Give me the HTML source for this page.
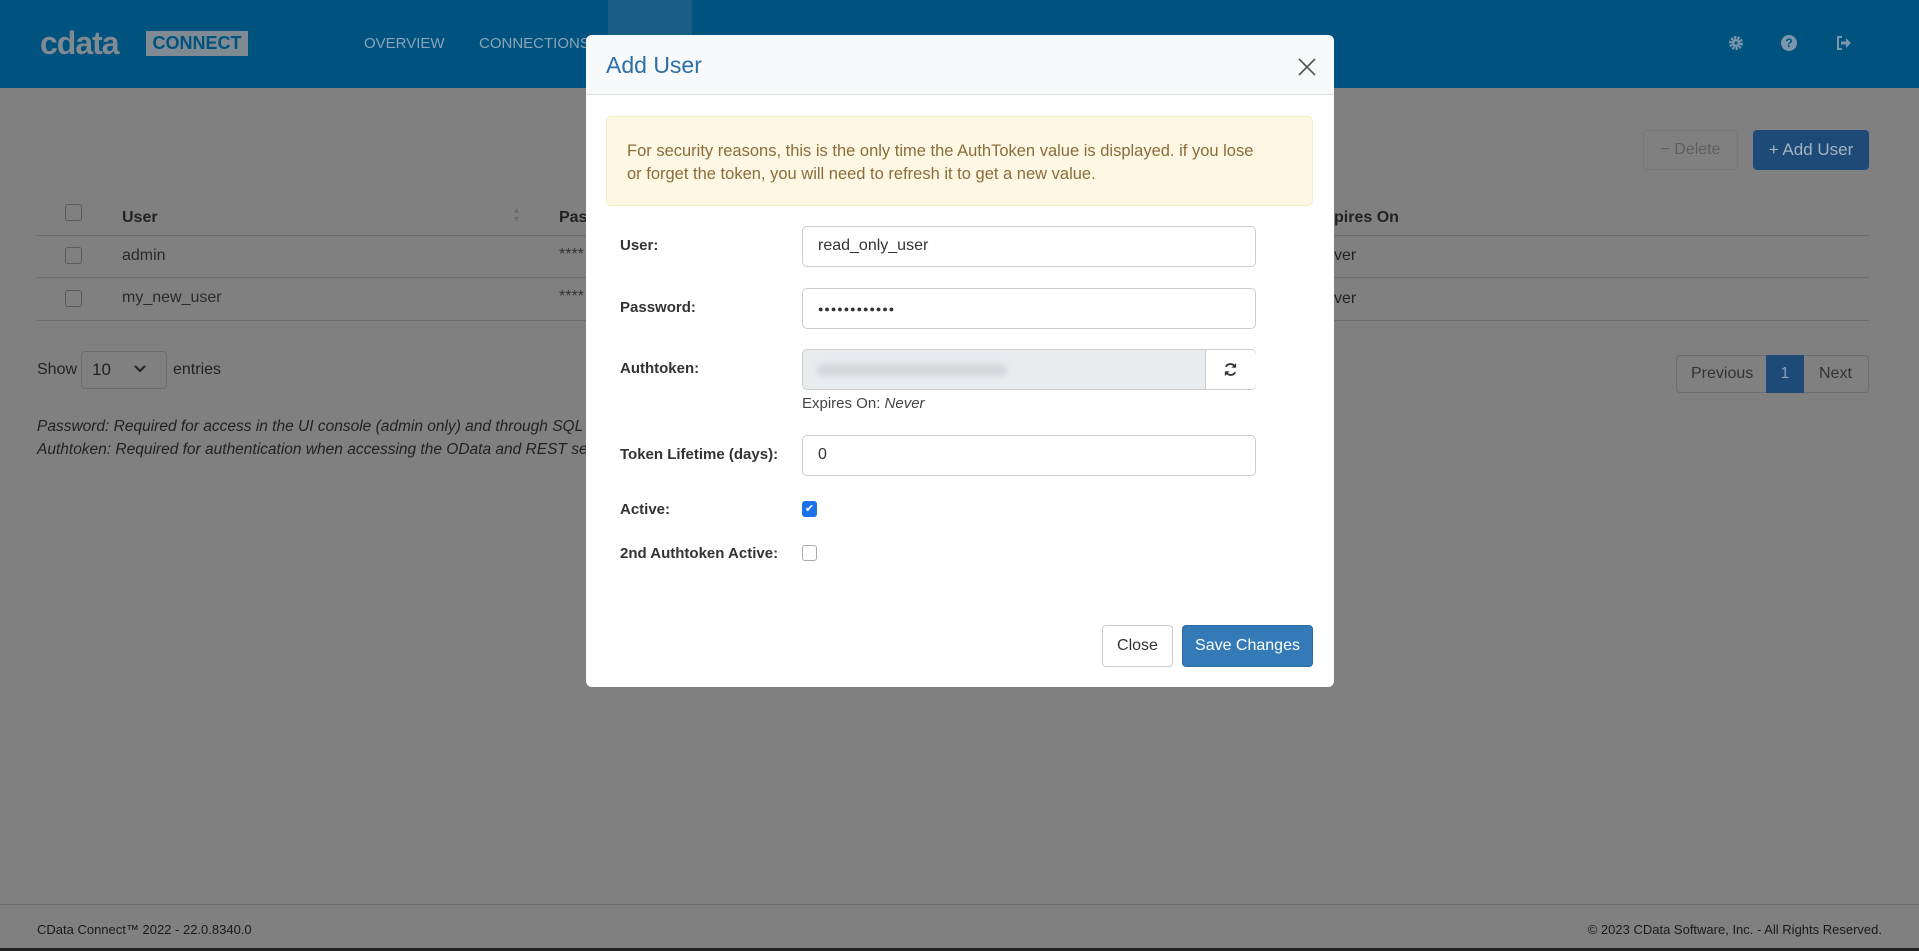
<!DOCTYPE html>
<html><head><meta charset="utf-8"><style>
*{box-sizing:border-box;margin:0;padding:0}
body{width:1919px;height:951px;overflow:hidden;background:#808080;font-family:"Liberation Sans",sans-serif;color:#1a1a1a;position:relative}
.abs{position:absolute}
.hdr{left:0;top:0;width:1919px;height:88px;background:#00527f}
.nav{color:#8aa3b8;font-size:15px;top:35px}
.cb{width:17px;height:17px;border:1px solid #5a5a5a;border-radius:3px}
.t{font-size:16px;color:#222}
.m{left:586px;top:35px;width:748px;height:652px;background:#fff;border-radius:6px;overflow:hidden}
.lbl{font-size:15px;font-weight:bold;color:#333;left:34px}
.inp{left:216px;width:454px;height:41px;border:1px solid #ccc;border-radius:5px;font-size:16px;color:#333;padding:10px 15px}
</style></head><body>
<div class="abs hdr"></div>
<div class="abs" style="left:608px;top:0;width:84px;height:40px;background:#1a5e85"></div>
<div class="abs" style="left:40px;top:27px;font-size:32px;font-weight:bold;color:#7f8a92;letter-spacing:-1px;line-height:32px">cdata</div>
<div class="abs" style="left:146px;top:31px;width:102px;height:25px;background:#7f8a92;color:#00527f;font-weight:bold;font-size:18px;text-align:center;line-height:25px">CONNECT</div>
<div class="abs nav" style="left:364px">OVERVIEW</div>
<div class="abs nav" style="left:479px">CONNECTIONS</div>
<svg class="abs" style="left:1728px;top:35px" width="16" height="16" viewBox="0 0 16 16"><circle cx="8" cy="8" r="5.5" fill="none" stroke="#7c96ac" stroke-width="3" stroke-dasharray="2.2 1.2"/><circle cx="8" cy="8" r="4" fill="#7c96ac"/><circle cx="8" cy="8" r="1.6" fill="#00527f"/></svg>
<div class="abs" style="left:1781px;top:35px;width:16px;height:16px;border-radius:50%;background:#7c96ac;color:#00527f;font-size:12px;font-weight:bold;text-align:center;line-height:16px">?</div>
<svg class="abs" style="left:1836px;top:35px" width="16" height="16" viewBox="0 0 16 16"><path d="M6 2H2v12h4" fill="none" stroke="#7c96ac" stroke-width="2"/><path d="M5 6.5h5V3l5 5-5 5V9.5H5z" fill="#7c96ac"/></svg>

<div class="abs" style="left:1643px;top:130px;width:95px;height:40px;border:1px solid #777;border-radius:4px;color:#5e5e5e;font-size:16px;line-height:38px;text-align:center">− Delete</div>
<div class="abs" style="left:1753px;top:130px;width:116px;height:40px;background:#1d4a77;border-radius:4px;color:#a3b3c4;font-size:17px;line-height:40px;text-align:center">+ Add User</div>

<div class="abs cb" style="left:65px;top:204px"></div>
<div class="abs t" style="left:122px;top:209px;font-weight:bold">User</div>
<div class="abs" style="left:512px;top:206px;color:#6e6e6e;font-size:9px;line-height:9px">▲<br>▼</div>
<div class="abs t" style="left:559px;top:209px;font-weight:bold;width:27px;overflow:hidden">Pas</div>
<div class="abs t" style="left:1334px;top:209px;font-weight:bold">pires On</div>
<div class="abs" style="left:37px;top:235px;width:1832px;height:1px;background:#6e6e6e"></div>
<div class="abs cb" style="left:65px;top:247px"></div>
<div class="abs t" style="left:122px;top:247px;color:#2a2a2a">admin</div>
<div class="abs t" style="left:559px;top:246px;color:#333">****</div>
<div class="abs t" style="left:1334px;top:247px">ver</div>
<div class="abs" style="left:37px;top:277px;width:1832px;height:1px;background:#6e6e6e"></div>
<div class="abs cb" style="left:65px;top:290px"></div>
<div class="abs t" style="left:122px;top:289px;color:#2a2a2a">my_new_user</div>
<div class="abs t" style="left:559px;top:288px;color:#333">****</div>
<div class="abs t" style="left:1334px;top:290px">ver</div>
<div class="abs" style="left:37px;top:320px;width:1832px;height:1px;background:#6e6e6e"></div>

<div class="abs t" style="left:37px;top:361px">Show</div>
<div class="abs" style="left:81px;top:351px;width:86px;height:38px;border:1px solid #6e6e6e;border-radius:4px;font-size:17px;padding:8px 10px;color:#222">10</div>
<svg class="abs" style="left:133px;top:364px" width="14" height="10" viewBox="0 0 14 10"><path d="M2 2l5 5 5-5" fill="none" stroke="#222" stroke-width="2"/></svg>
<div class="abs t" style="left:173px;top:361px">entries</div>
<div class="abs" style="left:1676px;top:355px;width:193px;height:38px;border:1px solid #6e6e6e;border-radius:4px"></div>
<div class="abs t" style="left:1691px;top:365px;color:#333">Previous</div>
<div class="abs" style="left:1766px;top:355px;width:38px;height:38px;background:#1d4a77;color:#8aa0b8;font-size:16px;text-align:center;line-height:38px">1</div>
<div class="abs t" style="left:1819px;top:365px;color:#333">Next</div>
<div class="abs t" style="left:37px;top:418px;font-style:italic;color:#222;font-size:15.5px">Password: Required for access in the UI console (admin only) and through SQL</div>
<div class="abs t" style="left:37px;top:441px;font-style:italic;color:#222;font-size:15.5px">Authtoken: Required for authentication when accessing the OData and REST se</div>

<div class="abs" style="left:0;top:904px;width:1919px;height:1px;background:#6a6a6a"></div>
<div class="abs" style="left:37px;top:922px;font-size:13px;color:#1a1a1a">CData Connect™ 2022 - 22.0.8340.0</div>
<div class="abs" style="right:37px;top:922px;font-size:13px;color:#1a1a1a">© 2023 CData Software, Inc. - All Rights Reserved.</div>
<div class="abs" style="left:0;top:948px;width:1919px;height:3px;background:#222"></div>

<div class="abs m">
 <div class="abs" style="left:0;top:0;width:748px;height:60px;background:#f8f9fa;border-bottom:1px solid #dee2e6"></div>
 <div class="abs" style="left:20px;top:17px;font-size:23px;color:#2a6fa8">Add User</div>
 <svg class="abs" style="left:712px;top:23px" width="18" height="18" viewBox="0 0 18 18"><path d="M1 1L17 17M17 1L1 17" stroke="#555" stroke-width="1.6"/></svg>
 <div class="abs" style="left:20px;top:81px;width:707px;height:90px;background:#fdf7e3;border:1px solid #f8ecc6;border-radius:5px;color:#8a6d3b;font-size:16.5px;line-height:23px;padding:23px 20px 0 20px">For security reasons, this is the only time the AuthToken value is displayed. if you lose<br>or forget the token, you will need to refresh it to get a new value.</div>
 <div class="abs lbl" style="top:202px">User:</div>
 <div class="abs inp" style="top:191px">read_only_user</div>
 <div class="abs lbl" style="top:264px">Password:</div>
 <div class="abs inp" style="top:253px;font-size:9px;letter-spacing:1px;padding-top:15px">●●●●●●●●●●●●</div>
 <div class="abs lbl" style="top:325px">Authtoken:</div>
 <div class="abs inp" style="top:314px;background:#e9ecef;padding:0">
  <div class="abs" style="left:14px;top:14px;width:190px;height:12px;background:#d4d6da;border-radius:6px;filter:blur(3px)"></div>
  <div class="abs" style="left:402px;top:0;width:51px;height:39px;background:#fff;border-left:1px solid #ccc;border-radius:0 5px 5px 0"></div>
  <svg class="abs" style="left:420px;top:12px" width="15" height="15" viewBox="0 0 16 16"><path d="M13 6A5.5 5.5 0 0 0 3 5M3 10a5.5 5.5 0 0 0 10 1" fill="none" stroke="#333" stroke-width="2"/><path d="M14 1v5H9zM2 15v-5h5z" fill="#333"/></svg>
 </div>
 <div class="abs" style="left:216px;top:360px;font-size:15px;color:#444">Expires On: <i>Never</i></div>
 <div class="abs lbl" style="top:411px">Token Lifetime (days):</div>
 <div class="abs inp" style="top:400px">0</div>
 <div class="abs lbl" style="top:466px">Active:</div>
 <div class="abs" style="left:216px;top:466px;width:15px;height:16px;background:#1a73e8;border-radius:3px;color:#fff;font-size:11px;text-align:center;line-height:16px">✔</div>
 <div class="abs lbl" style="top:510px">2nd Authtoken Active:</div>
 <div class="abs" style="left:216px;top:510px;width:15px;height:16px;border:1px solid #aaa;border-radius:3px"></div>
 <div class="abs" style="left:516px;top:590px;width:71px;height:42px;border:1px solid #ccc;border-radius:4px;font-size:16px;color:#333;text-align:center;line-height:40px">Close</div>
 <div class="abs" style="left:596px;top:590px;width:131px;height:42px;background:#337ab7;border:1px solid #2e6da4;border-radius:4px;font-size:16px;color:#fff;text-align:center;line-height:40px">Save Changes</div>
</div>
</body></html>
